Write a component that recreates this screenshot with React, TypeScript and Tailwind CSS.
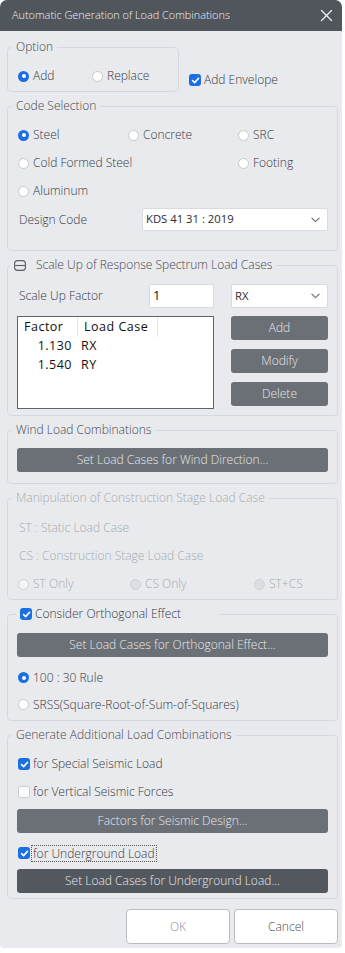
import React from "react";

const FONT = { fontFamily: '"Open Sans", "Noto Sans", "Noto Sans CJK KR", sans-serif' };

function Radio({ checked = false, disabled = false, light = false }: { checked?: boolean; disabled?: boolean; light?: boolean }) {
  if (checked)
    return (
      <span className="w-[11px] h-[11px] rounded-full bg-[#1a6fe3] flex items-center justify-center shrink-0">
        <span className="w-[4px] h-[4px] rounded-full bg-white" />
      </span>
    );
  if (disabled)
    return (
      <span
        className={
          light
            ? "w-[11px] h-[11px] rounded-full border border-[#cdd0d4] bg-[#f4f5f7] shrink-0"
            : "w-[11px] h-[11px] rounded-full border border-[#cdd0d4] bg-[#dcdee2] shrink-0"
        }
      />
    );
  return <span className="w-[11px] h-[11px] rounded-full border border-[#c6c9ce] bg-white shrink-0" />;
}

function Check({ checked = false }: { checked?: boolean }) {
  if (checked)
    return (
      <span className="w-[12px] h-[12px] rounded-[3px] bg-[#1a6fe3] flex items-center justify-center shrink-0">
        <svg width="9" height="9" viewBox="0 0 10 10">
          <path d="M1.8 5.2 L4 7.4 L8.3 2.6" fill="none" stroke="white" strokeWidth="1.8" strokeLinecap="round" strokeLinejoin="round" />
        </svg>
      </span>
    );
  return <span className="w-[12px] h-[12px] rounded-[3px] border border-[#c6c9ce] bg-white shrink-0" />;
}

function DarkButton({ label, dark = false }: { label: string; dark?: boolean }) {
  return (
    <div
      className={
        dark
          ? "h-[24px] w-full rounded-[3px] bg-[#53585f] text-[#e6e8eb] flex items-center justify-center"
          : "h-[24px] w-full rounded-[3px] bg-[#6b7077] text-[#e6e8eb] flex items-center justify-center"
      }
    >
      {label}
    </div>
  );
}

function Chevron() {
  return (
    <svg width="9" height="6" viewBox="0 0 9 6">
      <path d="M1 1.2 L4.5 4.6 L8 1.2" fill="none" stroke="#7b7f85" strokeWidth="1.3" strokeLinecap="round" strokeLinejoin="round" />
    </svg>
  );
}

export default function App() {
  return (
    <div className="w-[345px] h-[953px] bg-white overflow-hidden" style={FONT}>
      <div className="w-[342px] h-[948px] rounded-t-[7px] rounded-b-[4px] overflow-hidden bg-[#e8eaee] flex flex-col text-[12px] font-light text-[#36393e]">
        {/* Title bar */}
        <div className="h-[31px] bg-[#51565d] flex items-center justify-between pl-[12px] pr-[9px] shrink-0">
          <span className="text-[10.9px] text-[#eef0f2]">Automatic Generation of Load Combinations</span>
          <svg width="13" height="13" viewBox="0 0 13 13">
            <path d="M1.5 1.5 L11.5 11.5 M11.5 1.5 L1.5 11.5" stroke="#eef0f2" strokeWidth="1.3" strokeLinecap="round" />
          </svg>
        </div>

        <div className="pl-[7px] flex flex-col">
          {/* Option row */}
          <div className="flex items-start mt-[9px]">
            <fieldset className="w-[172px] border border-[#d5d8dd] rounded-[4px] px-[10px] pt-[12px] pb-[5px]">
              <legend className="-ml-[6px] px-[4px] leading-[14px] text-[#45484d]">Option</legend>
              <div className="h-[20px] flex items-center">
                <div className="w-[74px] flex items-center gap-[4px]">
                  <Radio checked />
                  <span>Add</span>
                </div>
                <div className="flex items-center gap-[4px]">
                  <Radio />
                  <span>Replace</span>
                </div>
              </div>
            </fieldset>
            <div className="ml-[10px] mt-[30px] h-[20px] flex items-center gap-[3px]">
              <Check checked />
              <span>Add Envelope</span>
            </div>
          </div>

          {/* Code Selection */}
          <fieldset className="w-[331px] mt-[7px] border border-[#d5d8dd] rounded-[4px] px-[10px] pt-[8px] pb-[19px]">
            <legend className="-ml-[6px] px-[4px] leading-[14px] text-[#45484d]">Code Selection</legend>
            <div className="grid grid-cols-[110px_110px_1fr]">
              <div className="h-[28px] flex items-center gap-[4px]"><Radio checked /><span>Steel</span></div>
              <div className="h-[28px] flex items-center gap-[4px]"><Radio /><span>Concrete</span></div>
              <div className="h-[28px] flex items-center gap-[4px]"><Radio /><span>SRC</span></div>
              <div className="h-[28px] flex items-center gap-[4px] col-span-2"><Radio /><span>Cold Formed Steel</span></div>
              <div className="h-[28px] flex items-center gap-[4px]"><Radio /><span>Footing</span></div>
              <div className="h-[28px] flex items-center gap-[4px] col-span-3"><Radio /><span>Aluminum</span></div>
            </div>
            <div className="mt-[3px] h-[23px] flex items-center justify-between">
              <span className="pl-[1px]">Design Code</span>
              <div className="w-[186px] h-[23px] mr-[-1px] bg-white border border-[#d8dbe0] rounded-[2px] flex items-center justify-between pl-[3px] pr-[7px]">
                <span className="text-[11.3px] font-normal text-[#2b2d31]">KDS 41 31 : 2019</span>
                <Chevron />
              </div>
            </div>
          </fieldset>

          {/* Scale Up */}
          <fieldset className="w-[331px] mt-[7px] border border-[#d5d8dd] rounded-[4px] px-[9px] pt-[12px] pb-[6px]">
            <legend className="-ml-[7px] px-[4px] leading-[14px] text-[#45484d] flex items-center gap-[10px]">
              <svg width="12" height="11" viewBox="0 0 12 11">
                <rect x="0.6" y="0.6" width="10.8" height="9.8" rx="3" fill="none" stroke="#5a5e64" strokeWidth="1.1" />
                <path d="M0.6 5.5 H11.4" stroke="#5a5e64" strokeWidth="1.1" />
              </svg>
              <span>Scale Up of Response Spectrum Load Cases</span>
            </legend>
            <div className="flex items-center justify-between h-[24px]">
              <div className="w-[197px] flex items-center justify-between">
                <span className="pl-[2px]">Scale Up Factor</span>
                <div className="w-[65px] h-[24px] bg-white border border-[#d8dbe0] rounded-[2px] flex items-center pl-[3px] font-normal text-[13px] text-[#111]">1</div>
              </div>
              <div className="w-[97px] h-[24px] bg-white border border-[#d8dbe0] rounded-[2px] flex items-center justify-between pl-[3px] pr-[7px]">
                <span className="text-[11.3px] font-normal text-[#2b2d31]">RX</span>
                <Chevron />
              </div>
            </div>
            <div className="mt-[8px] flex justify-between">
              <div className="w-[197px] h-[93px] bg-white border border-[#5f6369] text-[#111] font-normal text-[12.5px] tracking-[0.5px]">
                <div className="h-[20px] flex">
                  <div className="w-[60px] border-r border-[#e3e5e8] pl-[6px] flex items-center">Factor</div>
                  <div className="w-[80px] border-r border-[#e3e5e8] pl-[6px] flex items-center">Load Case</div>
                </div>
                <div className="h-[19px] flex items-center">
                  <span className="w-[54px] text-right">1.130</span>
                  <span className="pl-[9px]">RX</span>
                </div>
                <div className="h-[19px] flex items-center">
                  <span className="w-[54px] text-right">1.540</span>
                  <span className="pl-[9px]">RY</span>
                </div>
              </div>
              <div className="w-[97px] flex flex-col gap-[9px]">
                <DarkButton label="Add" />
                <DarkButton label="Modify" />
                <DarkButton label="Delete" />
              </div>
            </div>
          </fieldset>

          {/* Wind */}
          <fieldset className="w-[331px] mt-[7px] border border-[#d5d8dd] rounded-[4px] px-[9px] pt-[11px] pb-[11px]">
            <legend className="-ml-[5px] px-[4px] leading-[14px] text-[#45484d]">Wind Load Combinations</legend>
            <DarkButton label="Set Load Cases for Wind Direction..." />
          </fieldset>

          {/* Manipulation (disabled) */}
          <fieldset className="w-[331px] mt-[7px] border border-[#d5d8dd] rounded-[4px] px-[10px] pt-[9px] pb-[1px] text-[#a7aaaf]">
            <legend className="-ml-[6px] px-[4px] leading-[14px]">Manipulation of Construction Stage Load Case</legend>
            <div className="h-[28px] flex items-center pl-[1px]">ST : Static Load Case</div>
            <div className="h-[28px] flex items-center pl-[1px]">CS : Construction Stage Load Case</div>
            <div className="h-[28px] flex items-center">
              <div className="w-[112px] flex items-center gap-[4px]"><Radio disabled light /><span>ST Only</span></div>
              <div className="w-[124px] flex items-center gap-[4px]"><Radio disabled /><span>CS Only</span></div>
              <div className="flex items-center gap-[4px]"><Radio disabled /><span>ST+CS</span></div>
            </div>
          </fieldset>

          {/* Orthogonal */}
          <fieldset className="w-[331px] mt-[7px] border border-[#d5d8dd] rounded-[4px] px-[9px] pt-[12px] pb-[2px]">
            <legend className="-ml-[1px] pl-[4px] w-[203px] leading-[14px] flex items-center gap-[3px]">
              <Check checked />
              <span>Consider Orthogonal Effect</span>
            </legend>
            <DarkButton label="Set Load Cases for Orthogonal Effect..." />
            <div className="mt-[7px] h-[27px] flex items-center gap-[4px] pl-[1px]"><Radio checked /><span>100 : 30 Rule</span></div>
            <div className="h-[27px] flex items-center gap-[4px] pl-[1px]"><Radio /><span>SRSS(Square-Root-of-Sum-of-Squares)</span></div>
          </fieldset>

          {/* Generate */}
          <fieldset className="w-[331px] mt-[7px] border border-[#d5d8dd] rounded-[4px] px-[9px] pt-[8px] pb-[5px]">
            <legend className="-ml-[5px] px-[4px] leading-[14px] text-[#45484d]">Generate Additional Load Combinations</legend>
            <div className="h-[28px] flex items-center gap-[3px] pl-[1px]"><Check checked /><span>for Special Seismic Load</span></div>
            <div className="h-[28px] flex items-center gap-[3px] pl-[1px]"><Check /><span>for Vertical Seismic Forces</span></div>
            <div className="mt-[3px]"><DarkButton label="Factors for Seismic Design..." /></div>
            <div className="mt-[8px] h-[24px] flex items-center gap-[1px] pl-[1px]">
              <Check checked />
              <span className="border border-dotted border-[#555] px-[1px] leading-[15px]">for Underground Load</span>
            </div>
            <div className="mt-[4px]"><DarkButton label="Set Load Cases for Underground Load..." dark /></div>
          </fieldset>

          {/* Bottom buttons */}
          <div className="mt-[10px] flex justify-end gap-[4px] w-[331px]">
            <div className="w-[104px] h-[35px] bg-white border border-[#b9bcc1] rounded-[4px] flex items-center justify-center text-[#8a8d92]">OK</div>
            <div className="w-[104px] h-[35px] bg-white border border-[#b9bcc1] rounded-[4px] flex items-center justify-center text-[#4a4d52]">Cancel</div>
          </div>
        </div>
      </div>
    </div>
  );
}
